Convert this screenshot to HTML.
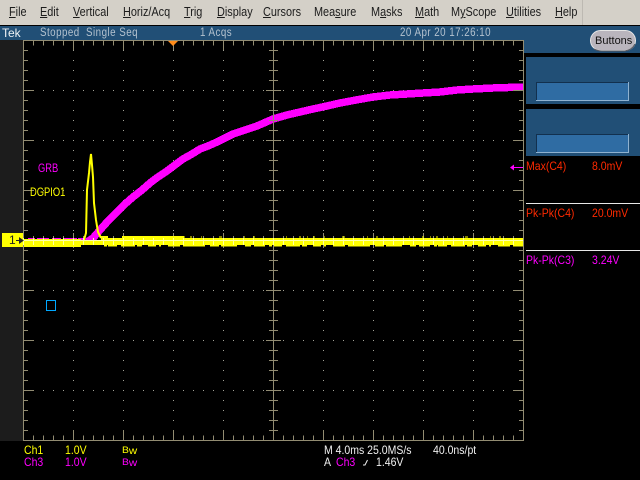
<!DOCTYPE html>
<html><head><meta charset="utf-8"><style>
html,body{margin:0;padding:0;background:#000;width:640px;height:480px;overflow:hidden}
body{position:relative;font-family:"Liberation Sans",sans-serif}
.a{position:absolute;white-space:pre;line-height:12px;transform-origin:0 0}
.m{top:6px;font-size:12.5px;color:#1c1c1c;transform:scaleX(.87)}
.m u{text-decoration:underline}
.s{top:27px;font-size:11.5px;color:#b4c2cf;letter-spacing:.55px;transform:scaleX(.85)}
.t{font-size:12px;transform:scaleX(.875)}
.l{font-size:12px;transform:scaleX(.78)}
.b{font-size:9px;top:444px;transform:scaleX(1.15)}
.b i{font-style:normal;position:relative;top:1px;font-size:10px}
svg{position:absolute;left:0;top:0}
</style></head><body>
<div class="a" style="left:0;top:0;width:640px;height:25px;background:#d4d0c8"></div>
<div class="a" style="left:582px;top:0;width:1px;height:25px;background:#bdb9b2"></div>
<div class="a" style="left:0;top:25px;width:640px;height:1px;background:#000"></div>
<div class="a" style="left:0;top:26px;width:640px;height:14px;background:#214f76"></div>
<div class="a" style="left:524px;top:40px;width:116px;height:13px;background:#214f76"></div>
<div class="a" style="left:0;top:40px;width:23px;height:401px;background:#1c1c1c"></div>

<span class="a m" style="left:9px"><u>F</u>ile</span>
<span class="a m" style="left:39.5px"><u>E</u>dit</span>
<span class="a m" style="left:73px"><u>V</u>ertical</span>
<span class="a m" style="left:122.5px"><u>H</u>oriz/Acq</span>
<span class="a m" style="left:184px"><u>T</u>rig</span>
<span class="a m" style="left:217px"><u>D</u>isplay</span>
<span class="a m" style="left:262.5px"><u>C</u>ursors</span>
<span class="a m" style="left:314px">Mea<u>s</u>ure</span>
<span class="a m" style="left:371px">M<u>a</u>sks</span>
<span class="a m" style="left:415px"><u>M</u>ath</span>
<span class="a m" style="left:451px">M<u>y</u>Scope</span>
<span class="a m" style="left:506px"><u>U</u>tilities</span>
<span class="a m" style="left:554.5px"><u>H</u>elp</span>

<span class="a" style="left:2px;top:27px;font-size:12px;color:#eef2f5">Tek</span>
<span class="a s" style="left:40px">Stopped  Single Seq</span>
<span class="a s" style="left:200px">1 Acqs</span>
<span class="a s" style="left:400px">20 Apr 20 17:26:10</span>

<svg width="640" height="480" viewBox="0 0 640 480">
<rect x="526" y="57" width="114" height="47" fill="#214f76"/>
<rect x="526" y="109" width="114" height="47" fill="#214f76"/>
<rect x="536" y="82" width="93" height="19" fill="#8fb2d0"/>
<rect x="536" y="82" width="92" height="18" fill="#12304e"/>
<rect x="537" y="83" width="91" height="17" fill="#2f6ca3"/>
<rect x="536" y="134" width="93" height="19" fill="#8fb2d0"/>
<rect x="536" y="134" width="92" height="18" fill="#12304e"/>
<rect x="537" y="135" width="91" height="17" fill="#2f6ca3"/>
<rect x="526" y="203" width="114" height="1" fill="#e8e8e8"/>
<rect x="526" y="250" width="114" height="1" fill="#e8e8e8"/>
<rect x="590.5" y="30.5" width="45" height="20" rx="10" fill="#b9b5bd" stroke="#e6e6e6"/>
<path d="M594 49 Q598 51 602 51 H625 Q632 50 635 44" fill="none" stroke="#55555c"/>

<g stroke="#a3a398" stroke-width="1" stroke-dasharray="1 9" fill="none">
<path d="M23 90.5H523M23 140.5H523M23 190.5H523M23 290.5H523M23 340.5H523M23 390.5H523"/>
<path d="M73.5 40V440M123.5 40V440M173.5 40V440M223.5 40V440M323.5 40V440M373.5 40V440M423.5 40V440M473.5 40V440"/>
</g>

<g fill="none" stroke="#928c72">
<path d="M23 240.5H523" stroke-width="9" stroke-dasharray="1 9"/>
<path d="M23 240.5H523" stroke-width="15" stroke-dasharray="1 49"/>
</g>

<g shape-rendering="crispEdges" fill="none">
<path d="M28 239H84" stroke="#ff00ff" stroke-width="2" stroke-dasharray="7 2 12 3 9 2 14 1"/>
<polyline stroke="#ff00ff" stroke-width="7.5" points="87,242 93,238 100,230 108,221 117,212 125,204 133,197 142,190 150,183 158,177 167,171 175,165 183,159 192,154 200,149 208,146 217,142 225,138 233,134 245,130 257,126 273,119 287,115 300,112 313,109 327,106 340,103 356,100 373,97 390,95 407,94 423,93 440,92 457,90 473,89 493,88 523,87"/>
<path d="M24 243H81" stroke="#ffff00" stroke-width="8"/>
<path d="M81 242.5H101" stroke="#ffff00" stroke-width="5"/>
<path d="M101 241.5H523" stroke="#ffff00" stroke-width="7"/>
<path d="M100 237H108M122 237H184" stroke="#ffff00" stroke-width="2"/>
<path d="M104 245.5H523" stroke="#ffff00" stroke-width="2" stroke-dasharray="3 1 9 4 14 2 5 6 8 3 2 7 12 3 22 5 9 2 16 8 6 3 11 4"/>
<path d="M184 237H523" stroke="#ffff00" stroke-width="1" stroke-dasharray="1 5 2 9 1 17 3 22 1 8 2 31 1 12 2 6"/>
</g>
<polyline fill="none" stroke="#ffff00" stroke-width="2" points="84,240 86,233 87,190 89,173 90,162 91,154 92,165 93,177 94,203 96,220 98,232 101,238"/>

<g fill="none" stroke="#928c72">
<path d="M23.5 40V441M23 40.5H524M523.5 40V441M23 440.5H524M273.5 40V440"/>
<path d="M23 43H523M23 438H523" stroke-width="5" stroke-dasharray="1 9"/>
<path d="M23 45H523M23 435H523" stroke-width="10" stroke-dasharray="1 49"/>
<path d="M26 40V440M521 40V440" stroke-width="4" stroke-dasharray="1 9"/>
<path d="M29 40V440M518 40V440" stroke-width="10" stroke-dasharray="1 49"/>
<path d="M273.5 40V440" stroke-width="9" stroke-dasharray="1 9"/>
<path d="M273.5 40V440" stroke-width="15" stroke-dasharray="1 49"/>
</g>
<rect x="24" y="240" width="499" height="1" fill="#ffffa8"/>
<path d="M23 241.5H523" stroke="#ffffa0" stroke-width="7" stroke-dasharray="1 9" fill="none"/>

<path d="M168 41H178L173 46Z" fill="#ff8c1a"/>
<rect x="2" y="233" width="21" height="14" fill="#ffff00"/>
<path d="M16 240.5H23M19.5 238L23 240.5L19.5 243Z" fill="#222" stroke="#222"/>
<path d="M511 167.5H523" stroke="#ff00ff" fill="none"/>
<path d="M510 167.5L514 164.5V170.5Z" fill="#ff00ff"/>
<rect x="46.5" y="300.5" width="9" height="10" fill="none" stroke="#00a8ff"/>
<path d="M363 465H365L367.5 460" fill="none" stroke="#f0f0f0"/>
</svg>

<span class="a" style="left:9px;top:234px;font-size:12px;color:#222">1</span>
<span class="a" style="left:595px;top:35px;font-size:11px;color:#111">Buttons</span>

<span class="a l" style="left:37.5px;top:162px;color:#ff00ff">GRB</span>
<span class="a l" style="left:29.5px;top:186px;color:#ffff00">DGPIO1</span>

<span class="a t" style="left:525.5px;top:160px;color:#ff2a00">Max(C4)</span>
<span class="a t" style="left:591.5px;top:160px;color:#ff2a00">8.0mV</span>
<span class="a t" style="left:525.5px;top:207px;color:#ff2a00">Pk-Pk(C4)</span>
<span class="a t" style="left:591.5px;top:207px;color:#ff2a00">20.0mV</span>
<span class="a t" style="left:525.5px;top:254px;color:#ff00ff">Pk-Pk(C3)</span>
<span class="a t" style="left:591.5px;top:254px;color:#ff00ff">3.24V</span>

<span class="a t" style="left:24px;top:444px;color:#ffff00">Ch1</span>
<span class="a t" style="left:65px;top:444px;color:#ffff00">1.0V</span>
<span class="a b" style="left:122px;color:#ffff00">B<i>w</i></span>
<span class="a t" style="left:24px;top:456px;color:#ff00ff">Ch3</span>
<span class="a t" style="left:65px;top:456px;color:#ff00ff">1.0V</span>
<span class="a b" style="left:122px;top:456px;color:#ff00ff">B<i>w</i></span>

<span class="a t" style="left:324px;top:444px;color:#f0f0f0">M 4.0ms 25.0MS/s</span>
<span class="a t" style="left:433px;top:444px;color:#f0f0f0">40.0ns/pt</span>
<span class="a t" style="left:324px;top:456px;color:#f0f0f0">A</span>
<span class="a t" style="left:336px;top:456px;color:#ff00ff">Ch3</span>
<span class="a t" style="left:376px;top:456px;color:#f0f0f0">1.46V</span>
</body></html>
